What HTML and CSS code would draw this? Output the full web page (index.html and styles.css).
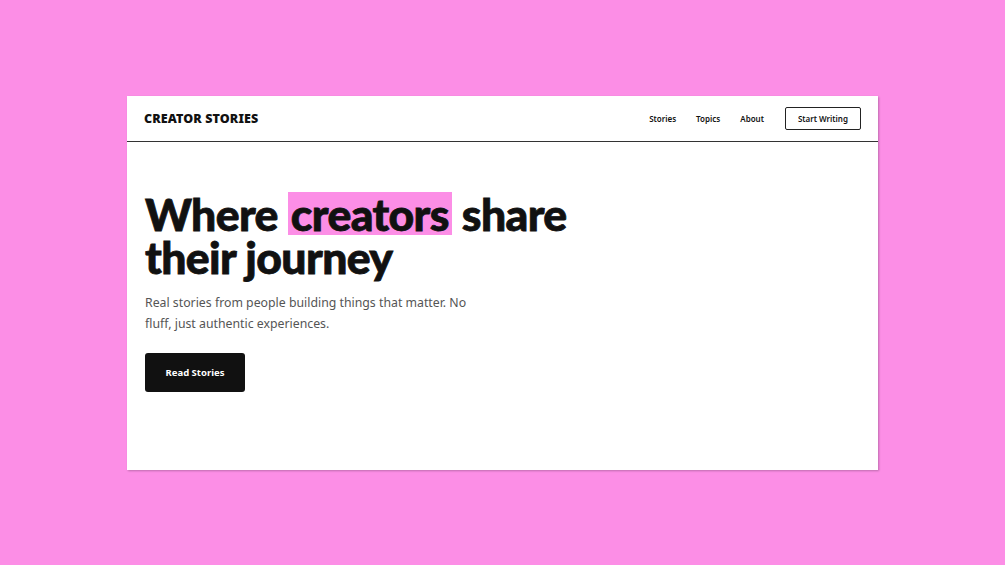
FILE: index.html
```html
<!DOCTYPE html>
<html lang="en">
<head>
<meta charset="UTF-8">
<meta name="viewport" content="width=device-width, initial-scale=1.0">
<title>Creator Stories</title>
<link rel="stylesheet" href="styles.css">
</head>
<body>
<div class="page">
    <header class="site-header">
        <div class="logo">CREATOR STORIES</div>
        <nav class="nav">
            <a href="#">Stories</a>
            <a href="#">Topics</a>
            <a href="#">About</a>
            <a href="#" class="btn-outline">Start Writing</a>
        </nav>
    </header>
    <section class="hero">
        <h1>Where <span class="mark">creators</span> share<br>their journey</h1>
        <p>Real stories from people building things that matter. No fluff, just authentic experiences.</p>
        <a href="#" class="btn-dark">Read Stories</a>
    </section>
</div>
</body>
</html>
```

FILE: styles.css
```css
body {
    font-family: 'Noto Sans', 'Open Sans', sans-serif;
    margin: 0;
    padding: 0;
    background: #fc8ee6;
    height: 100vh;
    display: flex;
    align-items: center;
    justify-content: center;
}
.page {
    width: 751px;
    height: 374px;
    background: #fff;
    box-shadow: 1px 1px 2px rgba(0, 0, 0, 0.25);
}
.site-header {
    height: 45px;
    border-bottom: 1.5px solid #333;
    display: flex;
    align-items: center;
    justify-content: space-between;
    padding: 0 17px;
}
.logo {
    font-size: 12.5px;
    font-weight: 900;
    color: #111;
    letter-spacing: 0.1px;
}
.nav {
    display: flex;
    align-items: center;
    gap: 20px;
}
.nav a {
    font-size: 8px;
    font-weight: 600;
    color: #111;
    text-decoration: none;
}
.nav .btn-outline {
    margin-left: 1px;
    border: 1.5px solid #222;
    border-radius: 2px;
    padding: 5px 12px;
}
.hero {
    padding: 50px 18px 0;
}
h1 {
    margin: 0;
    font-family: 'Lato', 'Noto Sans', sans-serif;
    font-size: 44.5px;
    font-weight: 900;
    line-height: 43px;
    letter-spacing: -0.6px;
    color: #111;
    -webkit-text-stroke: 0.8px #111; /* Lato tops out at bold here, thicken it */
}
.mark {
    display: inline-block;
    background: #fc8ee6;
    padding: 0 3px;
}
.hero p {
    margin: 14px 0 19px;
    max-width: 325px;
    font-size: 12.3px;
    line-height: 21px;
    color: #555;
}
.btn-dark {
    display: inline-block;
    width: 100px;
    height: 39px;
    line-height: 39px;
    text-align: center;
    background: #111;
    color: #fff;
    font-size: 9.5px;
    font-weight: 700;
    border-radius: 3px;
    text-decoration: none;
}
```
